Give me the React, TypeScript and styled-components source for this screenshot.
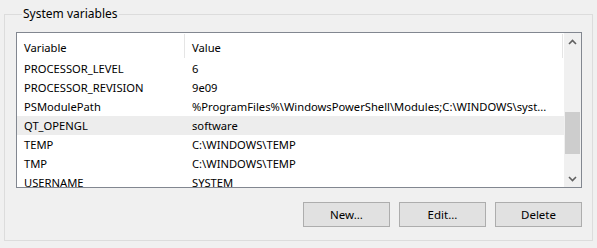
import React from 'react';
import styled, {createGlobalStyle} from 'styled-components';

interface IVariable {
    name: string;
    value: string;
}

const variables: IVariable[] = [
    {name: 'PROCESSOR_LEVEL', value: '6'},
    {name: 'PROCESSOR_REVISION', value: '9e09'},
    {name: 'PSModulePath', value: '%ProgramFiles%\\WindowsPowerShell\\Modules;C:\\WINDOWS\\syst...'},
    {name: 'QT_OPENGL', value: 'software'},
    {name: 'TEMP', value: 'C:\\WINDOWS\\TEMP'},
    {name: 'TMP', value: 'C:\\WINDOWS\\TEMP'},
    {name: 'USERNAME', value: 'SYSTEM'}
];

const selectedIndex = 3;

const GlobalStyle = createGlobalStyle`
    html, body {
        margin: 0;
        padding: 0;
        background: #f0f0f0;
    }

    body {
        font-family: 'Segoe UI', 'Noto Sans', 'Liberation Sans', sans-serif;
        font-size: 11.2px;
        color: #000;
    }
`;

const Chevron = ({up}: {up: boolean}) => (
    <svg width='9' height='6' viewBox='0 0 9 6'>
        <path d={up ? 'M1 5 L4.5 1.5 L8 5' : 'M1 1 L4.5 4.5 L8 1'} fill='none' stroke='#606060' strokeWidth='1.6' />
    </svg>
);

const App = () => {
    return (
        <>
            <GlobalStyle />
            <Page>
                <GroupBox>
                    <Legend>System variables</Legend>
                    <ListBox>
                        <ListContent>
                            <HeaderRow>
                                <div className='cell name'>Variable</div>
                                <div className='cell value'>Value</div>
                            </HeaderRow>
                            {variables.map((item, index) => (
                                <Row key={item.name} $selected={index === selectedIndex}>
                                    <div className='cell name'>{item.name}</div>
                                    <div className='cell value'>{item.value}</div>
                                </Row>
                            ))}
                        </ListContent>
                        <ScrollBar>
                            <ArrowButton>
                                <Chevron up />
                            </ArrowButton>
                            <Track>
                                <Thumb />
                            </Track>
                            <ArrowButton>
                                <Chevron up={false} />
                            </ArrowButton>
                        </ScrollBar>
                    </ListBox>
                    <ButtonBar>
                        <Button>New...</Button>
                        <Button>Edit...</Button>
                        <Button>Delete</Button>
                    </ButtonBar>
                </GroupBox>
            </Page>
        </>
    );
};

export default App;

export const Page = styled.div`
    width: 597px;
    height: 248px;
    padding: 6px 4px 0 4px;
    box-sizing: border-box;
`;

export const GroupBox = styled.fieldset`
    margin: 0;
    padding: 10px 10px 12px 11px;
    border: 1px solid #dcdcdc;
    height: 235px;
    box-sizing: border-box;
    display: flex;
    flex-direction: column;
`;

export const Legend = styled.legend`
    margin-left: 6px;
    padding: 0 1px;
    line-height: 16px;
    font-size: 12px;
`;

export const ListBox = styled.div`
    display: flex;
    height: 156px;
    box-sizing: border-box;
    border: 1px solid #828790;
    background: #fff;
`;

export const ListContent = styled.div`
    flex: 1;
    overflow: hidden;

    .cell {
        display: flex;
        align-items: center;
        box-sizing: border-box;
        padding-left: 7px;
        white-space: nowrap;
        overflow: hidden;
    }

    .name {
        width: 168px;
    }

    .value {
        flex: 1;
    }
`;

export const HeaderRow = styled.div`
    display: flex;
    height: 26px;

    .cell {
        height: 24px;
        margin-top: 1px;
        padding-top: 2px;
    }

    .name {
        border-right: 1px solid #e5e5e5;
    }

    .value {
        border-right: 1px solid #e5e5e5;
        margin-right: 1px;
    }
`;

export const Row = styled.div<{$selected: boolean}>`
    display: flex;
    height: 19px;
    background: ${props => (props.$selected ? '#ededed' : 'transparent')};

    .cell {
        height: 19px;
    }
`;

export const ScrollBar = styled.div`
    width: 17px;
    display: flex;
    flex-direction: column;
    background: #f0f0f0;
`;

export const ArrowButton = styled.div`
    height: 17px;
    display: flex;
    align-items: center;
    justify-content: center;
`;

export const Track = styled.div`
    flex: 1;
    padding: 62px 1px 0 1px;
`;

export const Thumb = styled.div`
    height: 42px;
    background: #cdcdcd;
`;

export const ButtonBar = styled.div`
    display: flex;
    justify-content: flex-end;
    gap: 9px;
    margin-top: 14px;
`;

export const Button = styled.button`
    width: 87px;
    height: 25px;
    box-sizing: border-box;
    border: 1px solid #adadad;
    background: #e1e1e1;
    font-family: inherit;
    font-size: 11.5px;
    color: #000;
    padding: 0;
`;
